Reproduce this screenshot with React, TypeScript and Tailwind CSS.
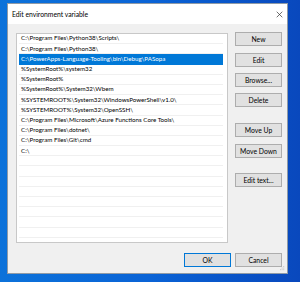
const paths = [
  "C:\\Program Files\\Python38\\Scripts\\",
  "C:\\Program Files\\Python38\\",
  "C:\\PowerApps-Language-Tooling\\bin\\Debug\\PASopa",
  "%SystemRoot%\\system32",
  "%SystemRoot%",
  "%SystemRoot%\\System32\\Wbem",
  "%SYSTEMROOT%\\System32\\WindowsPowerShell\\v1.0\\",
  "%SYSTEMROOT%\\System32\\OpenSSH\\",
  "C:\\Program Files\\Microsoft\\Azure Functions Core Tools\\",
  "C:\\Program Files\\dotnet\\",
  "C:\\Program Files\\Git\\cmd",
  "C:\\",
];

const SELECTED = 2;
const ROW_COUNT = 20;

function DialogButton({
  label,
  isDefault = false,
  className = "",
}: {
  label: string;
  isDefault?: boolean;
  className?: string;
}) {
  return (
    <button
      type="button"
      className={`flex h-[14px] w-[47px] items-center justify-center border bg-[#e1e1e1] text-[6.8px] leading-none text-black ${
        isDefault ? "border-[#0078d7]" : "border-[#adadad]"
      } ${className}`}
    >
      {label}
    </button>
  );
}

export default function App() {
  const rows = Array.from({ length: ROW_COUNT }, (_, i) => paths[i] ?? "");

  return (
    <div
      className="h-[282px] w-[300px] overflow-hidden bg-gradient-to-r from-[#0c72da] via-[#0a63d6] to-[#0948bd] pl-[7px] pt-[3px]"
      style={{ fontFamily: 'Lato, "Noto Sans", sans-serif' }}
    >
      <div className="relative flex h-[271px] w-[281px] flex-col border border-[#8f9aa6] bg-[#f0f0f0]">
        {/* title bar */}
        <div className="flex h-[20px] shrink-0 items-center justify-between bg-white pl-[4px] pr-[4px]">
          <span className="text-[6.8px] leading-none text-black">
            Edit environment variable
          </span>
          <svg viewBox="0 0 10 10" className="h-[7px] w-[7px]" aria-hidden>
            <path d="M1 1L9 9M9 1L1 9" stroke="#333" strokeWidth="1" fill="none" />
          </svg>
        </div>

        <div className="flex flex-1 flex-col pl-[8px] pr-[5px] pt-[9px]">
          <div className="flex gap-[7px]">
            {/* list */}
            <div className="h-[210px] w-[212px] overflow-hidden border border-[#c8c8c8] bg-white">
              {rows.map((p, i) => (
                <div
                  key={i}
                  className={`ml-[2px] mr-[4px] flex h-[10.2px] items-center border-b pl-[2px] text-[6.2px] leading-none whitespace-nowrap ${
                    i === SELECTED
                      ? "border-[#0078d7] bg-[#0078d7] text-white"
                      : "border-[#f0f0f0] text-black"
                  }`}
                >
                  {p}
                </div>
              ))}
            </div>

            {/* side buttons */}
            <div className="-mt-[1px] flex flex-col">
              <DialogButton label="New" />
              <DialogButton label="Edit" className="mt-[7px]" />
              <DialogButton label="Browse..." className="mt-[6px]" />
              <DialogButton label="Delete" className="mt-[6px]" />
              <DialogButton label="Move Up" className="mt-[16px]" />
              <DialogButton label="Move Down" className="mt-[7px]" />
              <DialogButton label="Edit text..." className="mt-[15px]" />
            </div>
          </div>

          <div className="mt-[10px] flex justify-end gap-[4px]">
            <DialogButton label="OK" isDefault />
            <DialogButton label="Cancel" />
          </div>
        </div>

        {/* size grip */}
        <svg
          viewBox="0 0 6 6"
          className="absolute bottom-[2px] right-[2px] h-[5px] w-[5px]"
          aria-hidden
        >
          <rect x="4" y="0" width="1" height="1" fill="#b8b8b8" />
          <rect x="2" y="2" width="1" height="1" fill="#b8b8b8" />
          <rect x="4" y="2" width="1" height="1" fill="#b8b8b8" />
          <rect x="0" y="4" width="1" height="1" fill="#b8b8b8" />
          <rect x="2" y="4" width="1" height="1" fill="#b8b8b8" />
          <rect x="4" y="4" width="1" height="1" fill="#b8b8b8" />
        </svg>
      </div>
    </div>
  );
}
